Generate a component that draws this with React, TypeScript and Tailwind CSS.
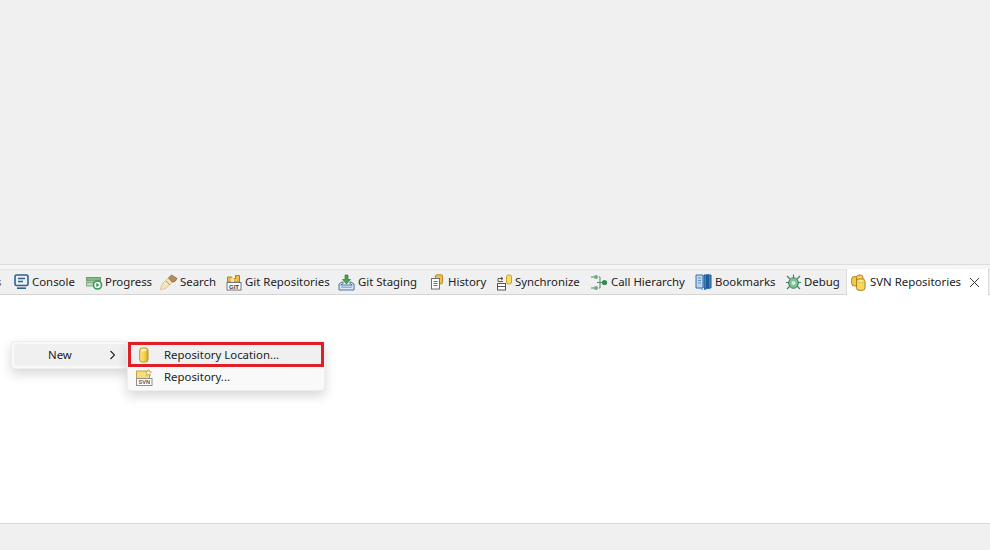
import React from "react";

const Monitor = () => (
  <svg width="16" height="16" viewBox="0 0 16 16">
    <rect x="1" y="1" width="13" height="10.5" rx="1.5" fill="#e8f0f8" stroke="#2f5f8f" strokeWidth="1.6" />
    <path d="M4 4.5h7M4 7.5h5" stroke="#2f5f8f" strokeWidth="1.3" />
    <path d="M3 14.2h9" stroke="#2f5f8f" strokeWidth="1.6" />
  </svg>
);
const ProgressIcon = () => (
  <svg width="17" height="16" viewBox="0 0 17 16">
    <rect x="0.5" y="3.5" width="14" height="3.5" fill="#86b886" stroke="#6f9a6f" />
    <rect x="0.5" y="8.5" width="7" height="3.5" fill="#c0d8c0" stroke="#8aa88a" />
    <circle cx="11.5" cy="11" r="4" fill="#fff" stroke="#2f9a4f" strokeWidth="1.6" />
    <path d="M10.3 8.8v4.4l3.2-2.2z" fill="#2f9a4f" />
  </svg>
);
const SearchIcon = () => (
  <svg width="18" height="17" viewBox="0 0 18 17">
    <path d="M0.5 15.5c0-3 2-6 4-8l4-3.5 4 4-4 4c-2.5 2.5-5 3.5-8 3.5z" fill="#f4e4b8" stroke="#d0bb88" strokeWidth="0.8" />
    <path d="M8.5 4l3-3 5.5 3.5-2 3-2.8.5z" fill="#b58d5f" stroke="#86643f" strokeWidth="0.8" />
    <path d="M6 7l4 4" stroke="#a08858" strokeWidth="0.8" />
  </svg>
);
const GitRepo = () => (
  <svg width="16" height="17" viewBox="0 0 16 17">
    <path d="M1.5 8V3h4l1 1.5h3V1.5h4V8z" fill="#eebf4e" stroke="#a98224" />
    <rect x="5" y="4" width="3" height="4" fill="#f8e09a" />
    <rect x="1" y="8.5" width="14" height="7.5" fill="#fff" stroke="#6f7780" />
    <text x="8" y="14.6" fontSize="6" fontWeight="700" textAnchor="middle" fill="#333" fontFamily="Liberation Sans, sans-serif">GIT</text>
  </svg>
);
const Staging = () => (
  <svg width="17" height="17" viewBox="0 0 17 17">
    <path d="M1 10l3-2h1v1.5l-2.2 1.5h11.4L12 9.5V8h1l3 2v6H1z" fill="#dbe8f4" stroke="#47749f" />
    <rect x="3" y="12.5" width="11" height="1.5" fill="#8fb4d6" />
    <path d="M7 1h3v4.5h2.5l-4 4.5-4-4.5H7z" fill="#49a34f" stroke="#2e7d33" strokeWidth="0.7" />
  </svg>
);
const HistoryIcon = () => (
  <svg width="14" height="16" viewBox="0 0 14 16">
    <rect x="5.5" y="0.8" width="7" height="9" rx="1" fill="#eec050" stroke="#b08a2c" />
    <rect x="1.5" y="4.5" width="8" height="10.5" fill="#fff" stroke="#6c7076" />
    <path d="M3.5 7.5h4M3.5 9.5h4M3.5 11.5h4" stroke="#6c7076" />
  </svg>
);
const SyncIcon = () => (
  <svg width="17" height="17" viewBox="0 0 17 17">
    <rect x="1.5" y="9.5" width="8" height="6.5" fill="#fff" stroke="#555" />
    <path d="M1.5 12.5h8" stroke="#555" />
    <path d="M2 7.5h5M2 7.5V4.5h5M5 3l2 1.5-2 1.5" fill="none" stroke="#4a4f55" strokeWidth="0.9" />
    <rect x="10.5" y="1" width="5" height="9" rx="1.8" fill="#f7dc6a" stroke="#c9a227" />
  </svg>
);
const CallIcon = () => (
  <svg width="18" height="17" viewBox="0 0 18 17">
    <path d="M1 3h6M1 14h6M9 3h1v11H9M10 8.5h3M7 8.5h3" fill="none" stroke="#5f7f6f" strokeWidth="1" />
    <circle cx="6" cy="3" r="2" fill="#6db07c" />
    <circle cx="6" cy="14" r="2" fill="#6db07c" />
    <circle cx="14.5" cy="8.5" r="2.6" fill="#2f8f4f" />
  </svg>
);
const BookmarkIcon = () => (
  <svg width="18" height="18" viewBox="0 0 18 18">
    <path d="M1 2h7v13H1z" fill="#b8d4ee" stroke="#3a74ad" />
    <path d="M3 5h3M3 7.5h3M3 10h3" stroke="#6c94bc" />
    <path d="M9 2h7v13H9z" fill="#4384c4" stroke="#25598f" />
    <path d="M11 1.5h3v14h-3z" fill="#1f5d9a" />
    <path d="M1 15l7 2v-2z" fill="#7aa9d4" />
    <path d="M9 15v2l7-2z" fill="#2c6ca8" />
  </svg>
);
const Bug = () => (
  <svg width="17" height="17" viewBox="0 0 17 17">
    <path d="M2 2l3 3M15 2l-3 3M1 8.5h3M16 8.5h-3M2 15l3-3M15 15l-3-3M8.5 0.5v3" stroke="#3f7d63" strokeWidth="1.1" />
    <ellipse cx="8.5" cy="9" rx="4.8" ry="5.3" fill="#7fc295" stroke="#2f7d5e" />
    <circle cx="8.5" cy="9" r="2" fill="#d7edd4" />
  </svg>
);
const SvnRepos = () => (
  <svg width="17" height="17" viewBox="0 0 17 17">
    <rect x="0.7" y="2.5" width="6" height="9.5" rx="2.6" fill="#f2c94c" stroke="#b0801c" />
    <rect x="5.5" y="1" width="6.5" height="9" rx="2.6" fill="#f5d35a" stroke="#b0801c" />
    <rect x="5.5" y="5" width="8.5" height="11.3" rx="2.6" fill="#f7d85e" stroke="#a87f14" />
    <ellipse cx="9.75" cy="7" rx="3.6" ry="1.4" fill="#fdf0aa" stroke="#c49a22" strokeWidth="0.5" />
  </svg>
);
const Cylinder = () => (
  <svg width="12" height="16" viewBox="0 0 12 16">
    <defs>
      <linearGradient id="cyl" x1="0" x2="1" y1="0" y2="0">
        <stop offset="0" stopColor="#fbe98a" />
        <stop offset="0.55" stopColor="#f5d44a" />
        <stop offset="1" stopColor="#d6a51f" />
      </linearGradient>
    </defs>
    <rect x="1.7" y="1" width="8.3" height="14" rx="2.6" fill="url(#cyl)" stroke="#bd9420" />
    <ellipse cx="5.85" cy="3" rx="3" ry="1.2" fill="#fdf4b8" />
  </svg>
);
const SvnNew = () => (
  <svg width="17" height="17" viewBox="0 0 17 17">
    <rect x="0.5" y="2" width="13" height="7.5" fill="#f5dd7c" stroke="#c4a33a" />
    <path d="M12.5 0.5l.9 2 2.1.3-1.5 1.5.4 2.2-1.9-1-1.9 1 .4-2.2-1.5-1.5 2.1-.3z" fill="#fff8d0" stroke="#a88a2c" strokeWidth="0.6" />
    <rect x="0.5" y="9.5" width="15.5" height="7" fill="#fff" stroke="#8a8f95" />
    <text x="8.2" y="15.2" fontSize="5.6" fontWeight="700" textAnchor="middle" fill="#555" fontFamily="Liberation Sans, sans-serif">SVN</text>
  </svg>
);

const tabs = [
  { label: "Console", icon: <Monitor />, cls: "w-[72px]", ic: "w-[17px]" },
  { label: "Progress", icon: <ProgressIcon />, cls: "w-[74px]", ic: "w-[18px]" },
  { label: "Search", icon: <SearchIcon />, cls: "w-[66px]", ic: "w-[19px]" },
  { label: "Git Repositories", icon: <GitRepo />, cls: "w-[112px]", ic: "w-[18px]" },
  { label: "Git Staging", icon: <Staging />, cls: "w-[92px]", ic: "w-[19px]" },
  { label: "History", icon: <HistoryIcon />, cls: "w-[66px]", ic: "w-[17px]" },
  { label: "Synchronize", icon: <SyncIcon />, cls: "w-[94px]", ic: "w-[18px]" },
  { label: "Call Hierarchy", icon: <CallIcon />, cls: "w-[105px]", ic: "w-[20px]" },
  { label: "Bookmarks", icon: <BookmarkIcon />, cls: "w-[90px]", ic: "w-[19px]" },
  { label: "Debug", icon: <Bug />, cls: "w-[61px]", ic: "w-[18px]" },
];

export default function App() {
  return (
    <div className="relative flex h-[550px] w-[990px] flex-col overflow-hidden bg-[#f0f0f0] text-[11.4px] text-[#222222] [font-family:'Noto_Sans',sans-serif]">
      <div className="h-[264px] border-b border-[#dcdcdc] bg-[#f0f0f0] box-content" />
      <div className="h-[4px] bg-[#f5f5f5]" />
      <div className="flex h-[24px] items-center border-b border-[#d4d4d4] border-t border-t-[#e4e4e4] bg-[#f0f0f0] box-content">
        <span className="w-[14px] shrink-0 -indent-[4px] text-[#555]">s</span>
        {tabs.map((t) => (
          <div key={t.label} className={`flex h-full shrink-0 items-center gap-[1px] ${t.cls}`}>
            <span className={`flex shrink-0 justify-start ${t.ic}`}>{t.icon}</span>
            <span className="whitespace-nowrap">{t.label}</span>
          </div>
        ))}
        <div className="-mb-px -mt-px flex h-[26px] w-[143px] shrink-0 items-center self-start border-l border-r border-[#dcdcdc] bg-white pl-[4px]">
          <SvnRepos />
          <span className="ml-[2px] whitespace-nowrap">SVN Repositories</span>
          <svg className="ml-[8px]" width="11" height="11" viewBox="0 0 11 11">
            <path d="M1 1l9 9M10 1l-9 9" stroke="#333" strokeWidth="1" />
          </svg>
        </div>
      </div>
      <div className="h-[228px] border-b border-[#d8d8d8] bg-white box-content" />
      <div className="flex-1 bg-[#f0f0f0]" />

      <div className="absolute left-[11px] top-[341px] h-[28px] w-[118px] rounded-[4px] border border-[#eeeeee] bg-[#f9f9f9] p-[2px] shadow-[0_5px_12px_rgba(0,0,0,0.16)]">
        <div className="flex h-full items-center rounded-[3px] bg-[#f0f0f0] pl-[34px]">
          <span>New</span>
          <svg className="ml-[37px]" width="7" height="10" viewBox="0 0 7 10">
            <path d="M1.5 1l4 4-4 4" fill="none" stroke="#222" strokeWidth="1.1" />
          </svg>
        </div>
      </div>

      <div className="absolute left-[127px] top-[341px] h-[50px] w-[198px] rounded-[4px] border border-[#eeeeee] bg-[#f9f9f9] shadow-[0_5px_12px_rgba(0,0,0,0.16)]">
        <div className="flex h-[25px] items-center border-[3px] border-[#e01e26] bg-[#f0f0f0] pl-[7px]">
          <Cylinder />
          <span className="ml-[14px] whitespace-nowrap">Repository Location...</span>
        </div>
        <div className="flex h-[20px] items-center pl-[8px]">
          <SvnNew />
          <span className="ml-[11px] whitespace-nowrap">Repository...</span>
        </div>
      </div>
    </div>
  );
}
